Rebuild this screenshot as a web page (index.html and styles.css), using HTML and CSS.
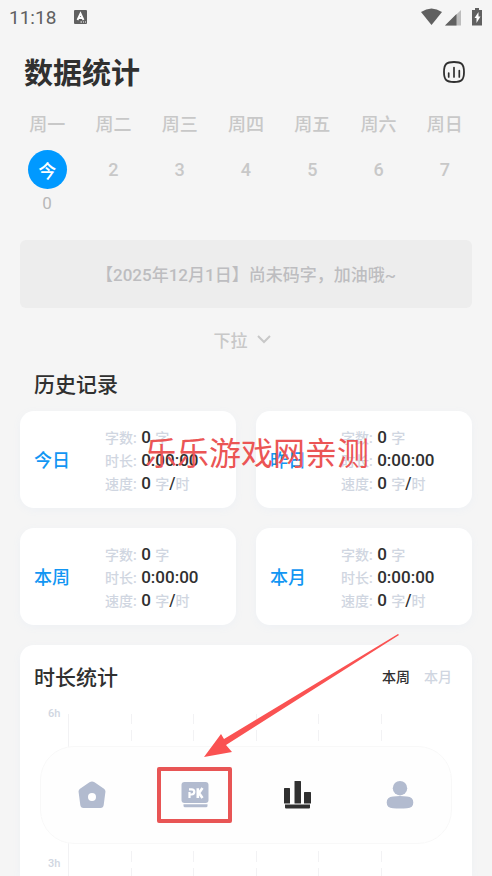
FILE: index.html
```html
<!DOCTYPE html>
<html lang="zh-CN">
<head>
<meta charset="utf-8">
<meta name="viewport" content="width=device-width, initial-scale=1">
<title>数据统计</title>
<link rel="stylesheet" href="styles.css">
</head>
<body>
<div class="app">
  <div class="status">
    <span class="clock">11:18</span>
    <svg class="ime" width="14" height="14" viewBox="0 0 14 14" aria-hidden="true">
      <rect width="13" height="14" rx="1" fill="#606060"/>
      <path d="M3.500 10 6.500 3.500 9.500 10M4.500 8h4" fill="none" stroke="#fff" stroke-width="1.800"/>
      <path d="M6.500 12h1.500M9 12h1M11 12h1" stroke="#fff" stroke-width="1"/>
    </svg>
    <svg class="signals" width="62" height="18" viewBox="0 0 62 18" aria-hidden="true">
      <path d="M0 4Q10.500-3 21 4L10.500 17Z" fill="#606060"/>
      <path d="M24 17.500 40 2V17.500Z" fill="#bdbdbd"/>
      <path d="M24 17.500 35.500 6V17.500Z" fill="#606060"/>
      <path d="M51 2h3V0h4v2h3v15.500H51Z" fill="#606060"/>
      <path d="M57.500 4 53.500 10h2v5l4-6.500h-2Z" fill="#fff"/>
    </svg>
  </div>

  <header class="head">
    <h1>数据统计</h1>
    <button class="icon-btn" aria-label="统计报表">
      <svg width="22" height="22" viewBox="0 0 22 22" fill="none" stroke="#303030" stroke-linecap="round">
        <path d="M11 1C18.500 1 21 3 21 11S18.500 21 11 21 1 19 1 11 3.500 1 11 1Z" stroke-width="1.800"/>
        <path d="M5.700 12v4M11 6.500V16M16.300 9.500V16" stroke-width="1.700"/>
      </svg>
    </button>
  </header>

  <section class="week">
    <div class="day"><span class="name">周一</span><span class="date today">今</span><span class="count">0</span></div>
    <div class="day"><span class="name">周二</span><span class="date">2</span></div>
    <div class="day"><span class="name">周三</span><span class="date">3</span></div>
    <div class="day"><span class="name">周四</span><span class="date">4</span></div>
    <div class="day"><span class="name">周五</span><span class="date">5</span></div>
    <div class="day"><span class="name">周六</span><span class="date">6</span></div>
    <div class="day"><span class="name">周日</span><span class="date">7</span></div>
  </section>

  <p class="notice">【2025年12月1日】尚未码字，加油哦~</p>

  <button class="expand">下拉
    <svg width="14" height="9" viewBox="0 0 14 9" fill="none" stroke="#c8c8c8" stroke-width="2" aria-hidden="true"><path d="M1 1 7 7 13 1"/></svg>
  </button>

  <h2 class="history-title">历史记录</h2>
  <section class="cards">
    <article class="card">
      <h3>今日</h3>
      <ul>
        <li><i>字数:</i> <b>0</b> <i>字</i></li>
        <li><i>时长:</i> <b>0:00:00</b></li>
        <li><i>速度:</i> <b>0</b> <i>字</i><em>/</em><i>时</i></li>
      </ul>
    </article>
    <article class="card">
      <h3>昨日</h3>
      <ul>
        <li><i>字数:</i> <b>0</b> <i>字</i></li>
        <li><i>时长:</i> <b>0:00:00</b></li>
        <li><i>速度:</i> <b>0</b> <i>字</i><em>/</em><i>时</i></li>
      </ul>
    </article>
    <article class="card">
      <h3>本周</h3>
      <ul>
        <li><i>字数:</i> <b>0</b> <i>字</i></li>
        <li><i>时长:</i> <b>0:00:00</b></li>
        <li><i>速度:</i> <b>0</b> <i>字</i><em>/</em><i>时</i></li>
      </ul>
    </article>
    <article class="card">
      <h3>本月</h3>
      <ul>
        <li><i>字数:</i> <b>0</b> <i>字</i></li>
        <li><i>时长:</i> <b>0:00:00</b></li>
        <li><i>速度:</i> <b>0</b> <i>字</i><em>/</em><i>时</i></li>
      </ul>
    </article>
    <div class="watermark">乐乐游戏网亲测</div>
  </section>

  <section class="chart-card">
    <div class="chart-head">
      <h2>时长统计</h2>
      <div class="tabs">
        <button class="tab active">本周</button>
        <button class="tab">本月</button>
      </div>
    </div>
    <div class="chart">
      <div class="axis"><span>6h</span><span>3h</span></div>
      <div class="grid"><div></div><div></div><div></div><div></div><div></div><div></div></div>
    </div>
  </section>
</div>

<nav class="nav">
  <a href="#home" aria-label="首页">
    <svg width="28" height="28" viewBox="0 0 28 28"><path d="M11.500 1.300Q14-.4 16.500 1.300L26 7.800Q27.700 9 27.400 11L25.700 24Q25.300 27 22.500 27H5.500Q2.700 27 2.300 24L.6 11Q.3 9 2 7.800Z" fill="#b2bbcf"/><circle cx="14" cy="16" r="4" fill="#fff"/></svg>
  </a>
  <a href="#pk" class="marked" aria-label="拼字">
    <svg width="28" height="28" viewBox="0 0 28 28"><rect x=".5" y="1" width="27" height="21" rx="3" fill="#b2bbcf"/><path d="M2.500 23.300h24v1.500q0 1.500-1.500 1.500H4q-1.500 0-1.500-1.500Z" fill="#b2bbcf"/><path d="M8.500 17V11M8 8.300h2.500q2.800 0 2.800 2.500T10.500 13.500H9" fill="none" stroke="#fff" stroke-width="2.200"/><path d="M16.800 7.300v9.700M21.500 7 18 12l3.500 5" fill="none" stroke="#fff" stroke-width="2.600"/></svg>
  </a>
  <a href="#stats" aria-label="统计" aria-current="page">
    <svg width="28" height="28" viewBox="0 0 28 28" fill="#303030"><rect x="1" y="7" width="6" height="15.500" rx=".5"/><rect x="11.500" y="0" width="6.500" height="22.500" rx=".5"/><rect x="21" y="11" width="7" height="11.500" rx=".5"/><path d="M2 23.500h25v3q0 1-1 1H3q-1 0-1-1Z"/></svg>
  </a>
  <a href="#me" aria-label="我的">
    <svg width="28" height="28" viewBox="0 0 28 28" fill="#b2bbcf"><circle cx="14" cy="7.200" r="7.200"/><path d="M7 15.500Q14 14.500 21 15.500 27.300 16 27.300 21.500T21 27.300Q14 27.800 7 27.300 .7 27 .7 21.500T7 15.500Z"/></svg>
  </a>
  <svg class="arrow" width="196" height="126" viewBox="0 0 196 126" aria-hidden="true"><path d="M194 1 195 2 22 112 28 119 0 124 17 101 20 106Z" fill="#fa5252"/></svg>
</nav>
</body>
</html>
```
FILE: styles.css
```css
* { box-sizing: border-box; margin: 0; padding: 0; }

body {
  background: #f5f5f5;
  color: #303030;
  font-family: Roboto, "Noto Sans CJK SC", sans-serif;
  font-weight: 500;
}

button {
  border: 0;
  background: none;
  color: inherit;
  font: inherit;
  cursor: pointer;
}

svg { display: block; }

.app {
  display: flex;
  flex-direction: column;
  height: 100vh;
  overflow: hidden;
}

.app > * { flex-shrink: 0; }

.status {
  display: flex;
  align-items: center;
  height: 34px;
  padding: 0 9px;
  color: #606060;
}

.clock { font-size: 19px; font-weight: 400; }
.ime { margin-left: 18px; }
.signals { margin-left: auto; }

.head {
  display: flex;
  align-items: center;
  justify-content: space-between;
  height: 76px;
  padding: 0 27px 0 24px;
}

h1 { padding-top: 4px; font-size: 29px; line-height: 40px; font-weight: 700; }

.week {
  display: grid;
  grid-template-columns: repeat(7, 1fr);
  height: 130px;
  padding: 0 14px;
  color: #c8c8c8;
}

.day {
  display: flex;
  flex-direction: column;
  align-items: center;
}

.name { font-size: 18px; line-height: 30px; }

.date {
  display: grid;
  place-items: center;
  width: 39px;
  height: 39px;
  margin-top: 10px;
  border-radius: 50%;
  font-size: 18px;
}

.today { background: #0099ff; color: #fff; }
.count { font-size: 17px; line-height: 29px; font-weight: 400; color: #b8b8b8; }

.notice {
  height: 68px;
  margin: 0 20px;
  border-radius: 6px;
  background: #ededed;
  color: #bdbdc0;
  font-size: 17px;
  line-height: 70px;
  text-align: center;
}

.expand {
  display: flex;
  align-items: center;
  align-self: center;
  gap: 9px;
  height: 62px;
  padding-right: 8px;
  color: #c8c8c8;
  font-size: 17px;
}

h2 { font-size: 21px; line-height: 30px; font-weight: 500; }

.history-title { margin: 0 34px 11px; }

.cards {
  position: relative;
  display: grid;
  grid-template-columns: 1fr 1fr;
  gap: 20px;
  margin: 0 20px;
}

.card {
  display: grid;
  grid-template-columns: 71px 1fr;
  align-items: center;
  padding: 15px 14px 13px;
  border-radius: 14px;
  background: #fff;
  box-shadow: 0 2px 8px #eef1f5;
}

h3 { color: #1296f3; font-size: 18px; line-height: 28px; font-weight: 500; }
ul { list-style: none; }

li {
  height: 23px;
  color: #d0d6e1;
  font-size: 14px;
  line-height: 23px;
  white-space: nowrap;
}

i, em { font-style: normal; }
li b { margin: 0 1px; color: #303030; font-size: 17px; font-weight: 500; }
li em { color: #303030; font-size: 16px; }

.watermark {
  position: absolute;
  top: 19px;
  left: 50%;
  margin-left: -101px;
  color: #eb5555;
  font-size: 32px;
  line-height: 48px;
  font-weight: 400;
  white-space: nowrap;
}

.chart-card {
  flex-grow: 1;
  margin: 20px 20px 0;
  padding: 18px 20px 0 14px;
  border-radius: 14px 14px 0 0;
  background: #fff;
  box-shadow: 0 2px 8px #eef1f5;
}

.chart-head {
  display: flex;
  align-items: flex-start;
  justify-content: space-between;
}

.tabs { display: flex; gap: 14px; color: #d0d6e1; font-size: 14px; }
.tab { line-height: 28px; }
.tab.active { color: #303030; }

.chart {
  display: grid;
  grid-template-columns: 34px 1fr;
  margin-top: 12px;
}

.axis {
  display: flex;
  flex-direction: column;
  gap: 132px;
  padding-left: 14px;
  color: #d0d6e1;
  font-size: 11px;
  line-height: 18px;
}

.grid {
  display: grid;
  grid-template-columns: repeat(6, 1fr);
  margin: 9px 9px -20px 0;
}

.grid div {
  border-left: 1px solid transparent;
  border-image: repeating-linear-gradient(#f2f2f4 0 11px, transparent 11px 17px) 1;
}

.grid div:first-child {
  border-image: none;
  border-color: #f2f2f4;
}

.nav {
  position: fixed;
  right: 40px;
  bottom: 32px;
  left: 40px;
  display: grid;
  grid-template-columns: repeat(4, 1fr);
  height: 98px;
  border: 1px solid #f8f8f8;
  border-radius: 34px;
  background: #fefefe;
}

.nav a { display: grid; place-items: center; }

.marked {
  place-self: center;
  width: 75px;
  height: 56px;
  border: 4px solid #e85555;
  border-radius: 2px;
}

.arrow {
  position: absolute;
  bottom: 84px;
  left: 163px;
}
```
